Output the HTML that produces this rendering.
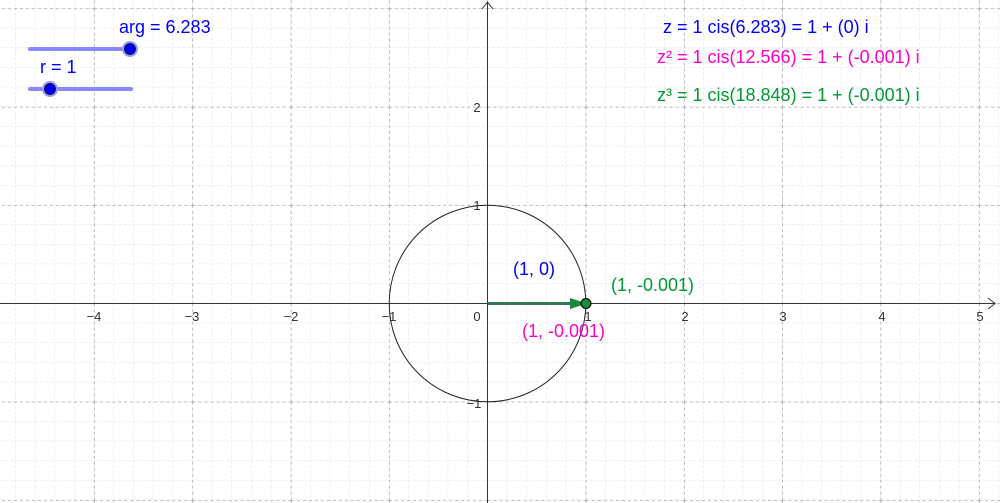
<!DOCTYPE html>
<html><head><style>body{margin:0;background:#fff}svg{display:block}text{font-family:"Liberation Sans",sans-serif}</style></head><body>
<svg width="1000" height="503" xmlns="http://www.w3.org/2000/svg">
<defs>
<pattern id="mn" x="487" y="303" width="19.66" height="19.66" patternUnits="userSpaceOnUse"><path d="M0 0V19.66M0 0H19.66" stroke="#ddd" stroke-width="1" stroke-dasharray="3,2" fill="none"/></pattern>
<pattern id="mj" x="487.5" y="303.5" width="98.3" height="98.3" patternUnits="userSpaceOnUse"><path d="M0 0V98.3M0 0H98.3" stroke="#888" stroke-width="1" stroke-dasharray="3,3" fill="none"/></pattern>
</defs>
<rect width="1000" height="503" fill="url(#mn)"/>
<rect width="1000" height="503" fill="url(#mj)"/>
<line x1="0" y1="303.5" x2="995" y2="303.5" stroke="#333"/>
<path d="M988 298L995 303.5L988 309" stroke="#333" fill="none"/>
<line x1="487.5" y1="503" x2="487.5" y2="2" stroke="#333"/>
<path d="M482 9L487.5 2L493 9" stroke="#333" fill="none"/>
<g font-size="13" fill="#333" text-anchor="middle">
<text x="94" y="321">−4</text><text x="192" y="321">−3</text><text x="291" y="321">−2</text><text x="389" y="321">−1</text>
<text x="477" y="321">0</text><text x="588" y="321">1</text><text x="685" y="321">2</text><text x="783" y="321">3</text><text x="882" y="321">4</text><text x="980" y="321">5</text>
<text x="477" y="112">2</text><text x="477" y="210">1</text><text x="474" y="408">−1</text>
</g>
<circle cx="487.5" cy="303.5" r="98.3" fill="none" stroke="#222"/>
<line x1="487.5" y1="303.5" x2="575" y2="303.5" stroke="#6a4a9c" stroke-width="3"/>
<line x1="487.5" y1="303.5" x2="575" y2="303.5" stroke="#1a8a3a" stroke-width="2"/>
<path d="M570 298L587 303.5L570 309Z" fill="#1a8a3a"/>
<circle cx="586" cy="303.5" r="5" fill="#1a8a3a" stroke="#000"/>
<g font-size="18">
<text x="513" y="275" fill="#0000ff">(1, 0)</text>
<text x="611" y="291" fill="#009933">(1, -0.001)</text>
<text x="522" y="337" fill="#ff00cc">(1, -0.001)</text>
<text x="119" y="33" fill="#0000ff">arg = 6.283</text>
<text x="40" y="73" fill="#0000ff">r = 1</text>
<text x="663" y="33" fill="#0000ff">z = 1 cis(6.283) = 1 + (0) i</text>
<text x="657" y="63" fill="#ff00cc">z² = 1 cis(12.566) = 1 + (-0.001) i</text>
<text x="657" y="101" fill="#009933">z³ = 1 cis(18.848) = 1 + (-0.001) i</text>
</g>
<line x1="30" y1="49" x2="131" y2="49" stroke="#8888ff" stroke-width="4" stroke-linecap="round"/>
<circle cx="130" cy="49" r="8" fill="#9999ff"/><circle cx="130" cy="49" r="5.5" fill="#0000ee" stroke="#000" stroke-width="0.7"/>
<line x1="30" y1="89" x2="131" y2="89" stroke="#8888ff" stroke-width="4" stroke-linecap="round"/>
<circle cx="50" cy="89" r="8" fill="#9999ff"/><circle cx="50" cy="89" r="5.5" fill="#0000ee" stroke="#000" stroke-width="0.7"/>
</svg>
</body></html>
